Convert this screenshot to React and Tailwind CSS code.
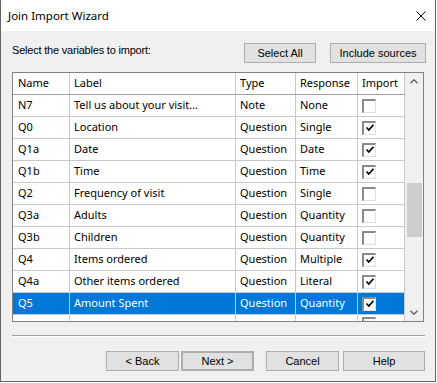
import React from 'react';

const rows = [
  { name: 'N7', label: 'Tell us about your visit...', type: 'Note', response: 'None', checked: false },
  { name: 'Q0', label: 'Location', type: 'Question', response: 'Single', checked: true },
  { name: 'Q1a', label: 'Date', type: 'Question', response: 'Date', checked: true },
  { name: 'Q1b', label: 'Time', type: 'Question', response: 'Time', checked: true },
  { name: 'Q2', label: 'Frequency of visit', type: 'Question', response: 'Single', checked: false },
  { name: 'Q3a', label: 'Adults', type: 'Question', response: 'Quantity', checked: false },
  { name: 'Q3b', label: 'Children', type: 'Question', response: 'Quantity', checked: false },
  { name: 'Q4', label: 'Items ordered', type: 'Question', response: 'Multiple', checked: true },
  { name: 'Q4a', label: 'Other items ordered', type: 'Question', response: 'Literal', checked: true },
  { name: 'Q5', label: 'Amount Spent', type: 'Question', response: 'Quantity', checked: true, selected: true },
  { name: '', label: '', type: '', response: '', checked: false },
];

const Checkbox = ({ checked }) => (
  <div className="w-[14px] h-[14px] bg-white border-t-2 border-l-2 border-t-[#8a8a8a] border-l-[#8a8a8a] border-r border-b border-r-[#e0e0e0] border-b-[#e0e0e0] flex items-center justify-center">
    {checked && (
      <svg width="10" height="10" viewBox="0 0 10 10">
        <path d="M1.5 4.5 L3.8 7 L8.5 1.8" fill="none" stroke="#000" strokeWidth="1.7" />
      </svg>
    )}
  </div>
);

const Chevron = ({ down }) => (
  <svg width="8" height="5" viewBox="0 0 8 5">
    <path d={down ? 'M0.5 0.8 L4 4.2 L7.5 0.8' : 'M0.5 4.2 L4 0.8 L7.5 4.2'} fill="none" stroke="#606060" strokeWidth="1.4" />
  </svg>
);

const Btn = ({ children, className = '' }) => (
  <button className={`h-[20px] bg-[#e1e1e1] border border-[#adadad] text-[11px] text-black flex items-center justify-center ${className}`}>
    {children}
  </button>
);

const App = () => {
  const cell = 'h-full flex items-center border-r border-[#c8c8c8] pl-[4px] whitespace-nowrap overflow-hidden';

  return (
    <div className="w-[437px] h-[383px] bg-white overflow-hidden" style={{ fontFamily: '"Liberation Sans", Arial, sans-serif' }}>
      <div className="w-[436px] h-[382px] border-x border-b border-[#646464] flex flex-col">
        {/* Title bar */}
        <div className="h-[31px] bg-white flex items-center justify-between pl-[7px] pr-[9px]">
          <span className="text-[11.5px] text-black" style={{ fontFamily: '"Noto Sans", sans-serif' }}>Join Import Wizard</span>
          <svg width="10" height="10" viewBox="0 0 10 10">
            <path d="M0.5 0.5 L9.5 9.5 M9.5 0.5 L0.5 9.5" stroke="#000" strokeWidth="1" />
          </svg>
        </div>

        {/* Body */}
        <div className="flex-1 bg-[#f0f0f0] pl-[11px] pr-[9px] flex flex-col">
          <div className="pt-[12px] flex items-start">
            <span className="text-[11px] leading-[14px] tracking-[-0.2px] text-black">Select the variables to import:</span>
            <Btn className="ml-auto w-[72px]">Select All</Btn>
            <Btn className="ml-[14px] w-[96px]">Include sources</Btn>
          </div>

          {/* Variable list */}
          <div className="mt-[9px] w-[412px] h-[250px] border border-[#828282] bg-white flex overflow-hidden">
            <div className="w-[392px] h-full overflow-hidden text-[11px]" style={{ fontFamily: '"Noto Sans", sans-serif' }}>
              <div className="h-[22px] flex border-b border-[#a0a0a0] text-black">
                <div className={`${cell} w-[57px] pl-[5px]`}>Name</div>
                <div className={`${cell} w-[166px]`}>Label</div>
                <div className={`${cell} w-[60px]`}>Type</div>
                <div className={`${cell} w-[62px]`}>Response</div>
                <div className={`${cell} w-[47px]`}>Import</div>
              </div>
              {rows.map((r, i) => (
                <div key={i} className={`h-[22px] flex border-b border-[#c8c8c8] ${r.selected ? 'bg-[#0078d7] text-white' : 'text-black'}`}>
                  <div className={`${cell} w-[57px] pl-[5px]`}>{r.name}</div>
                  <div className={`${cell} w-[166px]`}>{r.label}</div>
                  <div className={`${cell} w-[60px]`}>{r.type}</div>
                  <div className={`${cell} w-[62px]`}>{r.response}</div>
                  <div className={`${cell} w-[47px] ${i === rows.length - 1 ? 'items-start pt-[2px]' : ''}`}>
                    <Checkbox checked={r.checked} />
                  </div>
                </div>
              ))}
            </div>

            {/* Scrollbar */}
            <div className="w-[18px] h-full bg-[#f0f0f0] flex flex-col">
              <div className="h-[17px] flex items-center justify-center">
                <Chevron />
              </div>
              <div className="h-[93px]"></div>
              <div className="h-[54px] w-[15px] ml-[2px] bg-[#cdcdcd]"></div>
              <div className="flex-1"></div>
              <div className="h-[17px] flex items-center justify-center">
                <Chevron down />
              </div>
            </div>
          </div>

          {/* Separator */}
          <div className="mt-[13px] w-[413px] border-t border-t-[#a0a0a0] border-b border-b-white"></div>

          {/* Wizard buttons */}
          <div className="mt-[14px] flex">
            <Btn className="ml-[94px] w-[73px]">&lt; Back</Btn>
            <Btn className="ml-[2px] w-[73px] border-2 border-[#0078d7]">Next &gt;</Btn>
            <Btn className="ml-[12px] w-[73px]">Cancel</Btn>
            <Btn className="ml-[4px] w-[82px]">Help</Btn>
          </div>
        </div>
      </div>
    </div>
  );
};

export default App;
